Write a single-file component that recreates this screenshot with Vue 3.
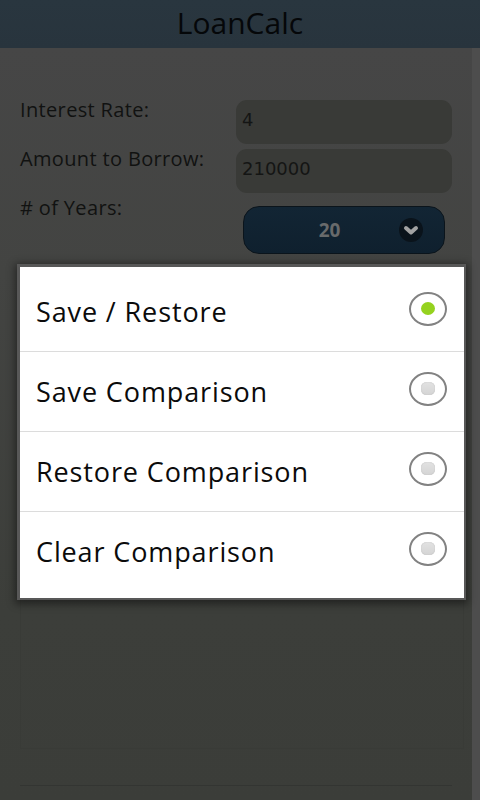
<script setup>
const fields = [
  { label: 'Interest Rate:', value: '4' },
  { label: 'Amount to Borrow:', value: '210000' },
]
const options = [
  { label: 'Save / Restore', on: true },
  { label: 'Save Comparison', on: false },
  { label: 'Restore Comparison', on: false },
  { label: 'Clear Comparison', on: false },
]
</script>

<template>
  <div class="screen">
    <header class="bar">LoanCalc</header>
    <main class="page">
      <div class="content">
        <div v-for="f in fields" :key="f.label" class="row">
          <span class="label">{{ f.label }}</span>
          <span class="input">{{ f.value }}</span>
        </div>
        <div class="row years">
          <span class="label">{{ '#' }} of Years:</span>
          <div class="select">
            <span class="select-value">20</span>
            <span class="chev">
              <svg width="24" height="24" viewBox="0 0 24 24">
                <path d="M7 10 L12 14.5 L17 10" fill="none" stroke="#a2a2a2" stroke-width="4" stroke-linecap="round" stroke-linejoin="round" />
              </svg>
            </span>
          </div>
        </div>
        <div class="panel"></div>
        <div class="rule"></div>
      </div>
      <div class="track"></div>
    </main>
    <div class="dialog">
      <div v-for="o in options" :key="o.label" class="option">
        <span class="option-label">{{ o.label }}</span>
        <span class="radio"><span class="dot" :class="{ on: o.on }"></span></span>
      </div>
    </div>
  </div>
</template>

<style>
html, body { margin: 0; background: #3d3e3b; }
</style>

<style scoped>
.screen {
  position: relative;
  width: 480px;
  height: 800px;
  overflow: hidden;
  display: flex;
  flex-direction: column;
  font-family: "Open Sans", "DejaVu Sans", sans-serif;
}
.bar {
  height: 48px;
  flex: none;
  background: linear-gradient(#29363f, #28343d);
  color: #050709;
  font-size: 30px;
  line-height: 45px;
  text-align: center;
}
.page {
  flex: 1;
  display: flex;
  background: linear-gradient(#464646 0%, #434442 30%, #3c3e3a 75%, #3b3d39 100%);
}
.content {
  flex: 1;
  min-width: 0;
  padding: 52px 20px 0;
  display: flex;
  flex-direction: column;
  gap: 5px;
}
.track {
  width: 8px;
  flex: none;
  background: #4d4d4d;
}
.row {
  display: flex;
  justify-content: space-between;
  height: 44px;
}
.label {
  color: #111211;
  font-size: 20px;
  line-height: 20px;
  letter-spacing: 0.35px;
}
.input {
  width: 216px;
  box-sizing: border-box;
  padding: 8px 6px 0;
  background: #393a37;
  border-radius: 11px;
  color: #141514;
  font-family: "DejaVu Sans", sans-serif;
  font-size: 18px;
  line-height: 24px;
}
.years { height: 48px; margin-top: 0; }
.select {
  width: 202px;
  height: 48px;
  margin: 8px 7px 0 0;
  box-sizing: border-box;
  display: flex;
  align-items: center;
  justify-content: center;
  position: relative;
  border: 1px solid #0b141b;
  border-radius: 16px;
  background: linear-gradient(#122534, #0f202e);
}
.select-value {
  color: #686a6b;
  font-size: 19px;
  font-weight: 700;
  margin-right: 29px;
}
.chev {
  position: absolute;
  right: 21px;
  top: 11px;
  width: 24px;
  height: 24px;
  border-radius: 50%;
  background: #0a131b;
}
.panel {
  flex: 1;
  margin: 40px -12px 31px 0;
  border: 1px solid #393b37;
  border-top: 0;
}
.rule {
  height: 1px;
  background: #333532;
  margin: 0 0 14px 0;
  width: 432px;
}
.dialog {
  position: absolute;
  left: 17px;
  top: 264px;
  width: 449px;
  height: 336px;
  box-sizing: border-box;
  padding-top: 5px;
  background: #fff;
  border: 3px solid #585858;
  border-right-width: 2px;
  border-bottom-width: 2px;
  box-shadow: 0 2px 8px 2px rgba(0, 0, 0, 0.45);
}
.option {
  height: 79px;
  display: flex;
  align-items: center;
  justify-content: space-between;
  padding: 0 17px 0 16px;
  border-bottom: 1px solid #dcdcdc;
}
.option:last-child { border-bottom: 0; }
.option-label {
  color: #0b0b0b;
  font-size: 27px;
  letter-spacing: 0.88px;
}
.radio {
  width: 38px;
  height: 34px;
  box-sizing: border-box;
  border: 2px solid #828282;
  border-radius: 50%;
  display: flex;
  align-items: center;
  justify-content: center;
  margin-top: -6px;
  background: #fff;
}
.dot {
  width: 14px;
  height: 13px;
  border-radius: 40%;
  background: linear-gradient(#e2e2e2, #d4d4d4);
  box-shadow: inset 0 0 1px #aaa;
}
.dot.on {
  border-radius: 50%;
  background: #95d21f;
  box-shadow: none;
}
</style>
